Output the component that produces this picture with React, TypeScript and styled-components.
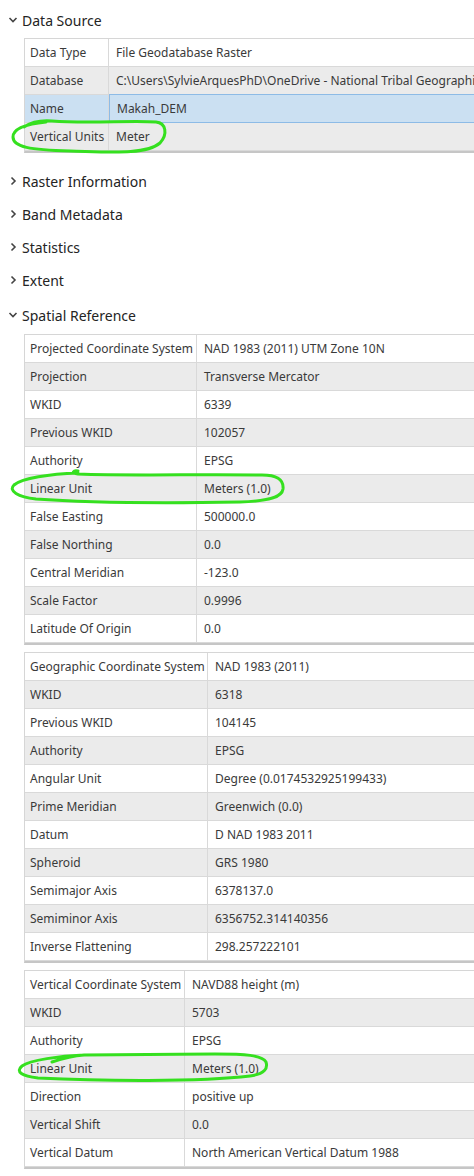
import React from "react"
import styled, { createGlobalStyle, css } from "styled-components"

const GlobalStyle = createGlobalStyle`
  html, body {
    margin: 0;
    padding: 0;
    background: #ffffff;
    overflow: hidden;
  }
  body {
    font-family: "Noto Sans", "Open Sans", sans-serif;
    color: #333333;
  }
`

interface Entry {
  key: string
  value: string
  selected?: boolean
}

interface TableData {
  keyWidth: number
  rows: Entry[]
}

const dataSource: TableData = {
  keyWidth: 84,
  rows: [
    { key: "Data Type", value: "File Geodatabase Raster" },
    {
      key: "Database",
      value:
        "C:\\Users\\SylvieArquesPhD\\OneDrive - National Tribal Geographic Information Support Center\\Makah.gdb",
    },
    { key: "Name", value: "Makah_DEM", selected: true },
    { key: "Vertical Units", value: "Meter" },
  ],
}

const projected: TableData = {
  keyWidth: 172,
  rows: [
    { key: "Projected Coordinate System", value: "NAD 1983 (2011) UTM Zone 10N" },
    { key: "Projection", value: "Transverse Mercator" },
    { key: "WKID", value: "6339" },
    { key: "Previous WKID", value: "102057" },
    { key: "Authority", value: "EPSG" },
    { key: "Linear Unit", value: "Meters (1.0)" },
    { key: "False Easting", value: "500000.0" },
    { key: "False Northing", value: "0.0" },
    { key: "Central Meridian", value: "-123.0" },
    { key: "Scale Factor", value: "0.9996" },
    { key: "Latitude Of Origin", value: "0.0" },
  ],
}

const geographic: TableData = {
  keyWidth: 183,
  rows: [
    { key: "Geographic Coordinate System", value: "NAD 1983 (2011)" },
    { key: "WKID", value: "6318" },
    { key: "Previous WKID", value: "104145" },
    { key: "Authority", value: "EPSG" },
    { key: "Angular Unit", value: "Degree (0.0174532925199433)" },
    { key: "Prime Meridian", value: "Greenwich (0.0)" },
    { key: "Datum", value: "D NAD 1983 2011" },
    { key: "Spheroid", value: "GRS 1980" },
    { key: "Semimajor Axis", value: "6378137.0" },
    { key: "Semiminor Axis", value: "6356752.314140356" },
    { key: "Inverse Flattening", value: "298.257222101" },
  ],
}

const vertical: TableData = {
  keyWidth: 160,
  rows: [
    { key: "Vertical Coordinate System", value: "NAVD88 height (m)" },
    { key: "WKID", value: "5703" },
    { key: "Authority", value: "EPSG" },
    { key: "Linear Unit", value: "Meters (1.0)" },
    { key: "Direction", value: "positive up" },
    { key: "Vertical Shift", value: "0.0" },
    { key: "Vertical Datum", value: "North American Vertical Datum 1988" },
  ],
}

const collapsed = ["Raster Information", "Band Metadata", "Statistics", "Extent"]

const Chevron = ({ open }: { open: boolean }) => (
  <svg width="10" height="10" viewBox="0 0 10 10">
    {open ? (
      <path d="M1.5 3 L5 6.5 L8.5 3" fill="none" stroke="#444" strokeWidth="1.6" />
    ) : (
      <path d="M3.5 1.5 L7 5 L3.5 8.5" fill="none" stroke="#444" strokeWidth="1.6" />
    )}
  </svg>
)

const PropertyTable = ({ data, spacing }: { data: TableData; spacing: number }) => (
  <Table $keyWidth={data.keyWidth} $spacing={spacing}>
    {data.rows.map((row, i) => (
      <Row key={row.key + i} $alt={i % 2 === 1} $selected={row.selected}>
        <KeyCell>{row.key}</KeyCell>
        <ValueCell $selected={row.selected}>{row.value}</ValueCell>
      </Row>
    ))}
  </Table>
)

const App = () => {
  return (
    <Page>
      <GlobalStyle />
      <Section>
        <Header $height={35}>
          <Chevron open />
          <Title>Data Source</Title>
        </Header>
        <PropertyTable data={dataSource} spacing={12} />
      </Section>

      {collapsed.map(name => (
        <Header key={name} $height={33}>
          <Chevron open={false} />
          <Title>{name}</Title>
        </Header>
      ))}

      <Section>
        <Header $height={37}>
          <Chevron open />
          <Title>Spatial Reference</Title>
        </Header>
        <PropertyTable data={projected} spacing={7} />
        <PropertyTable data={geographic} spacing={7} />
        <PropertyTable data={vertical} spacing={0} />
      </Section>

      {/* hand drawn highlight marks over the page */}
      <Marks width="474" height="1176" viewBox="0 0 474 1176">
        <path d="M46 122 C26 124 13 129 13 137 C13 147 30 150 70 151 C110 152 146 155 160 143 C168 134 166 123 156 122 C130 120 90 124 52 121 C40 120 30 123 24 127" />
        <path d="M78 473 C50 474 22 478 14 485 C8 491 18 497 36 499 C90 503 180 503 240 502 C270 501 282 497 283 489 C284 479 276 475 262 475 C200 474 130 476 78 474 C70 473 74 470 78 471" />
        <path d="M84 1055 C60 1056 30 1060 22 1066 C15 1072 22 1076 38 1078 C100 1081 200 1082 250 1076 C265 1074 268 1068 266 1062 C262 1055 245 1054 215 1054 C170 1054 120 1055 84 1055 C70 1056 58 1060 52 1062" />
      </Marks>
    </Page>
  )
}

export default App

const Page = styled.div`
  position: relative;
  width: 474px;
  height: 1176px;
  padding-top: 3px;
  box-sizing: border-box;
  overflow: hidden;
`

const Section = styled.div`
  display: flex;
  flex-direction: column;
`

const Header = styled.div<{ $height: number }>`
  display: flex;
  align-items: center;
  gap: 4px;
  height: ${p => p.$height}px;
  padding-left: 8px;
  padding-bottom: 1px;
  box-sizing: border-box;
`

const Title = styled.span`
  font-size: 14px;
  color: #242424;
  white-space: nowrap;
`

const Table = styled.div<{ $keyWidth: number; $spacing: number }>`
  display: grid;
  grid-template-columns: ${p => p.$keyWidth}px 1fr;
  width: 640px;
  margin-left: 24px;
  margin-bottom: ${p => p.$spacing}px;
  border-top: 1px solid #d6d6d6;
  border-left: 1px solid #d6d6d6;
  border-bottom: 2px solid #c6c6c6;
  font-size: 12px;
  color: #3a3a3a;
`

const Row = styled.div<{ $alt: boolean; $selected?: boolean }>`
  display: contents;

  & > div {
    background: ${p => (p.$alt ? "#ebebeb" : "#ffffff")};
    ${p =>
      p.$selected &&
      css`
        background: #cbe0f2;
      `}
  }
`

const cellBase = css`
  height: 28px;
  box-sizing: border-box;
  display: flex;
  align-items: center;
  white-space: nowrap;
  overflow: hidden;
  border-bottom: 1px solid #d9d9d9;
`

const KeyCell = styled.div`
  ${cellBase};
  padding-left: 5px;
  border-right: 1px solid #d9d9d9;
`

const ValueCell = styled.div<{ $selected?: boolean }>`
  ${cellBase};
  padding-left: 7px;
  ${p =>
    p.$selected &&
    css`
      border: 1px solid #8dbbe6;
      border-right: none;
      margin-top: -1px;
      height: 29px;
    `}
`

const Marks = styled.svg`
  position: absolute;
  top: 0;
  left: 0;
  pointer-events: none;

  path {
    fill: none;
    stroke: #35e01f;
    stroke-width: 3;
    stroke-linecap: round;
    stroke-linejoin: round;
  }
`
